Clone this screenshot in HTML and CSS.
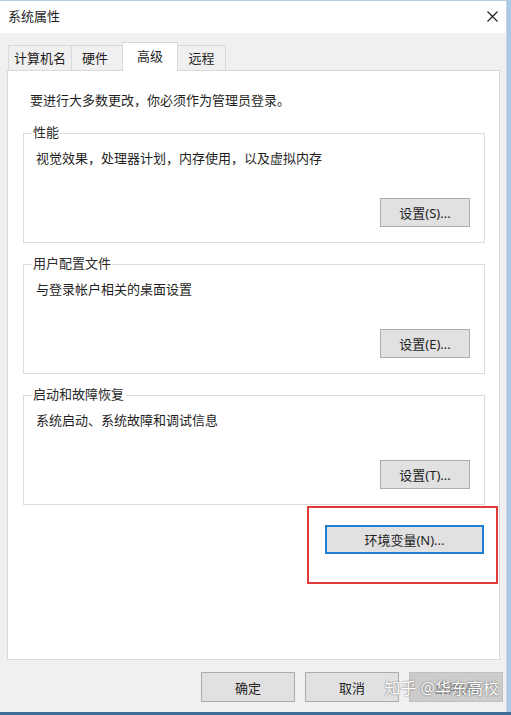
FILE: index.html
```html
<!doctype html>
<html lang="zh-CN">
<head>
    <meta charset="UTF-8">
    <title>系统属性</title>
    <link rel="stylesheet" href="styles.css">
</head>
<body>
    <div class="window">
        <header class="titlebar">
            <span class="title">系统属性</span>
            <svg class="close" viewBox="0 0 11 11"><path d="M0.5 0.5L10.5 10.5M10.5 0.5L0.5 10.5" stroke="#1a1a1a" stroke-width="1.1" fill="none"/></svg>
        </header>

        <div class="content">
            <nav class="tabs">
                <span class="tab tab-name">计算机名</span>
                <span class="tab tab-hw">硬件</span>
                <span class="tab tab-adv selected">高级</span>
                <span class="tab tab-remote">远程</span>
            </nav>

            <section class="panel">
                <p class="intro">要进行大多数更改，你必须作为管理员登录。</p>

                <div class="group">
                    <div class="group-title">性能</div>
                    <p class="group-text">视觉效果，处理器计划，内存使用，以及虚拟内存</p>
                    <button class="btn">设置(S)...</button>
                </div>

                <div class="group">
                    <div class="group-title">用户配置文件</div>
                    <p class="group-text">与登录帐户相关的桌面设置</p>
                    <button class="btn">设置(E)...</button>
                </div>

                <div class="group">
                    <div class="group-title">启动和故障恢复</div>
                    <p class="group-text">系统启动、系统故障和调试信息</p>
                    <button class="btn">设置(T)...</button>
                </div>

                <div class="highlight">
                    <button class="btn btn-env">环境变量(N)...</button>
                </div>
            </section>

            <footer class="actions">
                <button class="btn btn-footer">确定</button>
                <button class="btn btn-footer">取消</button>
                <button class="btn btn-footer" disabled>应用(A)</button>
                <span class="watermark">知乎 @华东高校</span>
            </footer>
        </div>
    </div>
    <div class="edge-bottom"></div>
</body>
</html>
```

FILE: styles.css
```css
:root {
    --cl-window: #f0f0f0;
    --cl-border: #d9d9d9;
    --cl-group: #dcdcdc;
    --cl-text: #1f1f1f;
    --cl-button: #e1e1e1;
    --cl-button-border: #adadad;
    --cl-focus: #1f7fd4;
    --cl-mark: #e03a3a;
}

html, body {
    margin: 0;
    padding: 0;
    width: 511px;
    height: 715px;
    overflow: hidden;
}

body {
    display: flex;
    flex-direction: column;
    background: #a9c9e6;
    font-family: "Noto Sans", "Noto Sans CJK SC", sans-serif;
    font-size: 13px;
    color: var(--cl-text);
}

.window {
    width: 507px;
    height: 712px;
    background: var(--cl-window);
    display: flex;
    flex-direction: column;
    box-sizing: border-box;
    border-right: 1px solid #c9d3dc;
}

.titlebar {
    height: 33px;
    box-sizing: border-box;
    border-top: 1px solid #b4d0e8;
    background: white;
    display: flex;
    align-items: center;
    padding: 0 8px 2px 8px;
}

.title {
    line-height: 16px;
}

.close {
    width: 11px;
    height: 11px;
    margin-left: auto;
}

.content {
    padding: 10px 6px 0 7px;
    display: flex;
    flex-direction: column;
}

/* tabs */
.tabs {
    display: flex;
    align-items: flex-end;
    height: 27px;
    padding-left: 1px;
}

.tab {
    height: 25px;
    box-sizing: border-box;
    border: 1px solid var(--cl-border);
    border-bottom: none;
    margin-left: -1px;
    display: flex;
    align-items: center;
    justify-content: center;
    padding-bottom: 1px;
    background: var(--cl-window);
}

.tab:first-child {
    margin-left: 0;
}

.tab-name { width: 64px; }
.tab-hw { width: 52px; padding-right: 4px; }
.tab-adv { width: 56px; }
.tab-remote { width: 49px; }

.tab.selected {
    height: 29px;
    background: white;
    margin-bottom: -1px;
    position: relative;
    z-index: 1;
    padding-bottom: 4px;
}

/* panel */
.panel {
    height: 590px;
    box-sizing: border-box;
    border: 1px solid var(--cl-border);
    background: white;
    padding: 21px 14px 0 15px;
    display: flex;
    flex-direction: column;
}

.intro {
    margin: 0 0 25px 7px;
    line-height: 16px;
}

.group {
    border: 1px solid var(--cl-group);
    padding: 0 14px 15px 12px;
    margin-bottom: 21px;
    display: flex;
    flex-direction: column;
}

.group:nth-of-type(3) {
    margin-bottom: 0;
}

.group-title {
    margin: -10px 0 0 -4px;
    padding: 0 1px;
    background: white;
    width: fit-content;
    line-height: 16px;
    color: #2a2a2a;
}

.group-text {
    margin: 10px 0 0 0;
    line-height: 16px;
}

.btn {
    font-family: inherit;
    font-size: 13px;
    color: var(--cl-text);
    background: var(--cl-button);
    border: 1px solid var(--cl-button-border);
    height: 29px;
    padding: 0;
    box-sizing: border-box;
}

.group .btn {
    width: 90px;
    margin-top: 32px;
    align-self: flex-end;
}

.highlight {
    width: 191px;
    height: 78px;
    box-sizing: border-box;
    border: 2px solid var(--cl-mark);
    margin: 1px -13px 0 auto;
    padding: 17px 12px 0 16px;
}

.btn-env {
    width: 159px;
    height: 29px;
    border: 2px solid var(--cl-focus);
}

/* footer */
.actions {
    position: relative;
    display: flex;
    justify-content: flex-end;
    gap: 10px;
    padding-top: 12px;
    margin-right: -3px;
}

.btn-footer {
    width: 94px;
    height: 30px;
}

.btn-footer:disabled {
    background: #cccccc;
    border-color: #bfbfbf;
    color: #8a8a8a;
}

.watermark {
    position: absolute;
    right: 4px;
    top: 19px;
    font-size: 16px;
    line-height: 18px;
    color: white;
    text-shadow: 0 0 2px rgba(0, 0, 0, 0.45), 0 0 1px rgba(0, 0, 0, 0.3);
}

.edge-bottom {
    height: 3px;
    background: #3f6d98;
}
```
